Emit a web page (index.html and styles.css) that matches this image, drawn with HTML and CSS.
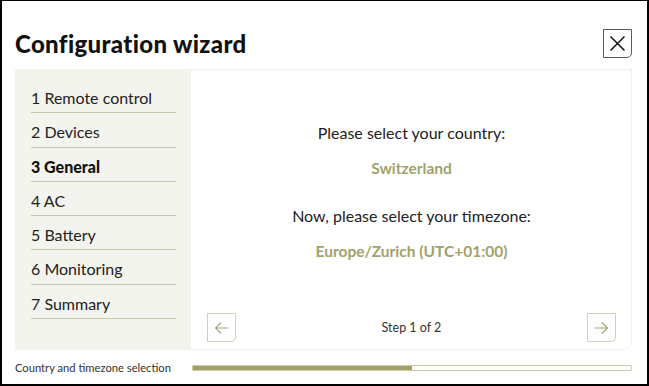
FILE: index.html
```html
<!DOCTYPE html>
<html lang="en">
<head>
<meta charset="utf-8">
<title>Configuration wizard</title>
<link rel="stylesheet" href="styles.css">
</head>
<body>
<div class="frame">
  <header class="header">
    <h1 class="title">Configuration wizard</h1>
    <button class="close" aria-label="Close">
      <svg width="17" height="17" viewBox="0 0 17 17"><path d="M1.5 1.5 L15.5 15.5 M15.5 1.5 L1.5 15.5" stroke="#111" stroke-width="1.5" fill="none"/></svg>
    </button>
  </header>
  <main class="card">
    <nav class="steps">
      <div class="step">1 Remote control</div>
      <div class="step">2 Devices</div>
      <div class="step active">3 General</div>
      <div class="step">4 AC</div>
      <div class="step">5 Battery</div>
      <div class="step">6 Monitoring</div>
      <div class="step">7 Summary</div>
    </nav>
    <section class="panel">
      <div class="content">
        <p class="label">Please select your country:</p>
        <p class="value">Switzerland</p>
        <p class="label second">Now, please select your timezone:</p>
        <p class="value">Europe/Zurich (UTC+01:00)</p>
      </div>
      <div class="nav">
        <button class="arrow" aria-label="Previous">
          <svg width="18" height="18" viewBox="0 0 18 18"><path d="M15.5 9 H2.5 M8 3.5 L2.5 9 L8 14.5" stroke="#a3a46c" stroke-width="1.1" fill="none"/></svg>
        </button>
        <span class="count">Step 1 of 2</span>
        <button class="arrow" aria-label="Next">
          <svg width="18" height="18" viewBox="0 0 18 18"><path d="M2.5 9 H15.5 M10 3.5 L15.5 9 L10 14.5" stroke="#a3a46c" stroke-width="1.1" fill="none"/></svg>
        </button>
      </div>
    </section>
  </main>
  <footer class="footer">
    <span class="footer-label">Country and timezone selection</span>
    <div class="progress"><div class="fill" style="width:50%"></div></div>
  </footer>
</div>
</body>
</html>
```

FILE: styles.css
```css
* { box-sizing: border-box; }
html, body { margin: 0; padding: 0; }
body { background: #fff; font-family: Lato, "Noto Sans", sans-serif; color: #222; }
.frame {
  width: 649px;
  height: 386px;
  border: solid #000;
  border-width: 1px 2px 2px 2px;
  display: flex;
  flex-direction: column;
}
.header {
  display: flex;
  justify-content: space-between;
  align-items: center;
  padding: 20px 15px 0 13px;
  height: 68px;
}
.title {
  margin: 0;
  font-family: Lato, sans-serif;
  font-weight: 900;
  font-size: 24px;
  letter-spacing: 0.35px;
  color: #111;
  padding-bottom: 3px;
}
.close {
  width: 29px;
  height: 29px;
  padding: 0;
  border: 1px solid #5a5a5a;
  border-radius: 0 0 5px 0;
  background: #fff;
  display: flex;
  align-items: center;
  justify-content: center;
  margin-bottom: 4px;
}
.card {
  margin: 0 15px 0 13px;
  height: 281px;
  display: flex;
}
.steps {
  width: 176px;
  background: #f4f4ee;
  padding: 10px 15px 0 16px;
}
.step {
  height: 34.3px;
  border-bottom: 1px solid #c9caa8;
  font-size: 16px;
  line-height: 16px;
  padding-top: 11px;
  color: #222;
}
.step.active { font-weight: 900; color: #111; }
.panel {
  flex: 1;
  border: 1px solid #f0f0e8;
  border-left: none;
  border-radius: 0 0 9px 0;
  display: flex;
  flex-direction: column;
  padding: 0 15px 7px 16px;
}
.content {
  flex: 1;
  display: flex;
  flex-direction: column;
  align-items: center;
  padding-top: 53px;
}
.content p { margin: 0; }
.label { font-size: 16px; line-height: 20px; color: #222; }
.label.second { margin-top: 28px; }
.value { font-size: 15.5px; line-height: 20px; font-weight: 700; color: #a1a26a; margin-top: 15px !important; }
.nav {
  display: flex;
  justify-content: space-between;
  align-items: center;
}
.arrow {
  width: 29px;
  height: 29px;
  padding: 0;
  background: #fff;
  border: 1px solid #cfd0b2;
  border-radius: 0 0 5px 0;
  display: flex;
  align-items: center;
  justify-content: center;
}
.count { font-size: 12.5px; color: #333; }
.footer {
  flex: 1;
  display: flex;
  align-items: center;
  padding: 1px 15px 0 13px;
}
.footer-label {
  width: 177px;
  font-size: 11.2px;
  color: #333;
}
.progress {
  flex: 1;
  height: 6px;
  border: 1px solid #c9caa8;
  border-radius: 0 2px 2px 0;
  overflow: hidden;
}
.fill { height: 100%; background: #a1a26a; }
```
